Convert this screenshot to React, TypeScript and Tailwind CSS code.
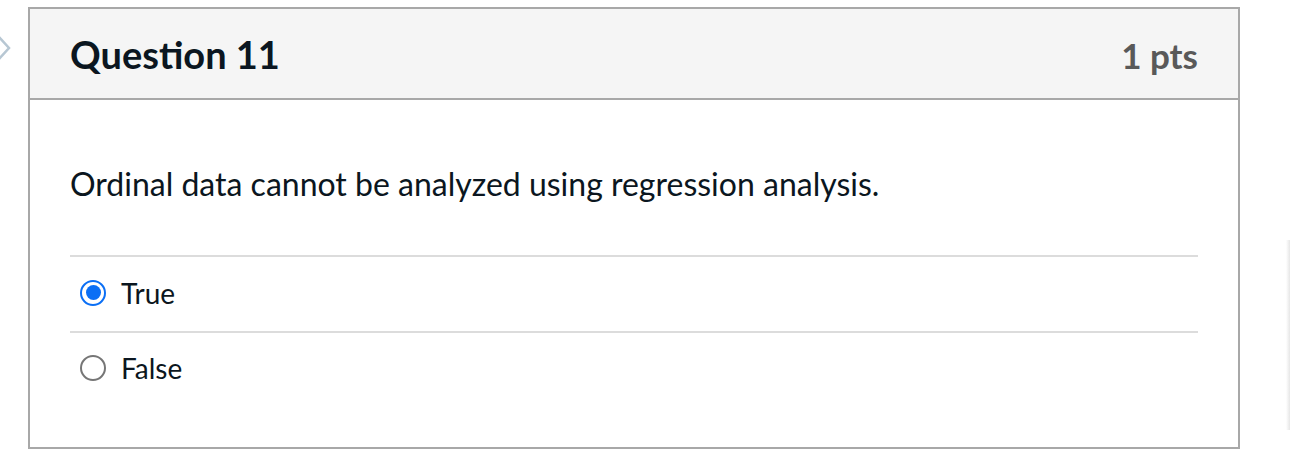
import React from "react";

export default function App() {
  return (
    <div className="relative w-[1290px] h-[474px] bg-white overflow-hidden" style={{ fontFamily: "Lato, 'Liberation Sans', sans-serif" }}>
      {/* left chevron */}
      <svg className="absolute left-[-4px] top-[34px]" width="16" height="28" viewBox="0 0 16 28">
        <path d="M2 2 L13 14 L2 26" fill="none" stroke="#b7c7d3" strokeWidth="2.5" />
      </svg>
      {/* right edge shadow */}
      <div className="absolute right-0 top-[240px] w-[4px] h-[190px] bg-gradient-to-r from-white to-[#e6e6e6]" />

      <div className="ml-[28px] mt-[7px] w-[1212px] h-[442px] border-2 border-[#a8a8a8] flex flex-col">
        <div className="h-[91px] bg-[#f5f5f5] border-b-2 border-[#a8a8a8] flex items-center justify-between pl-[40px] pr-[40px]">
          <div className="text-[38px] font-bold text-[#0b1620] leading-none">Question 11</div>
          <div className="text-[35px] font-bold text-[#595959] leading-none mt-[3px]">1 pts</div>
        </div>
        <div className="px-[40px] pt-[66px]">
          <div className="text-[32px] text-[#0b1620] leading-[36px]">Ordinal data cannot be analyzed using regression analysis.</div>
          <div className="mt-[53px] border-t-2 border-[#dcdcdc]">
            <label className="flex items-center h-[76px] pb-[3px] border-b-2 border-[#dcdcdc]">
              <span className="ml-[10px] w-[26px] h-[26px] rounded-full border-[2.5px] border-[#0b6ff5] flex items-center justify-center">
                <span className="w-[15px] h-[15px] rounded-full bg-[#0b6ff5]" />
              </span>
              <span className="ml-[15px] text-[28px] text-[#0b1620] leading-none">True</span>
            </label>
            <label className="flex items-center h-[70px]">
              <span className="ml-[10px] w-[26px] h-[26px] rounded-full border-2 border-[#767676]" />
              <span className="ml-[15px] text-[28px] text-[#0b1620] leading-none">False</span>
            </label>
          </div>
        </div>
      </div>
    </div>
  );
}
